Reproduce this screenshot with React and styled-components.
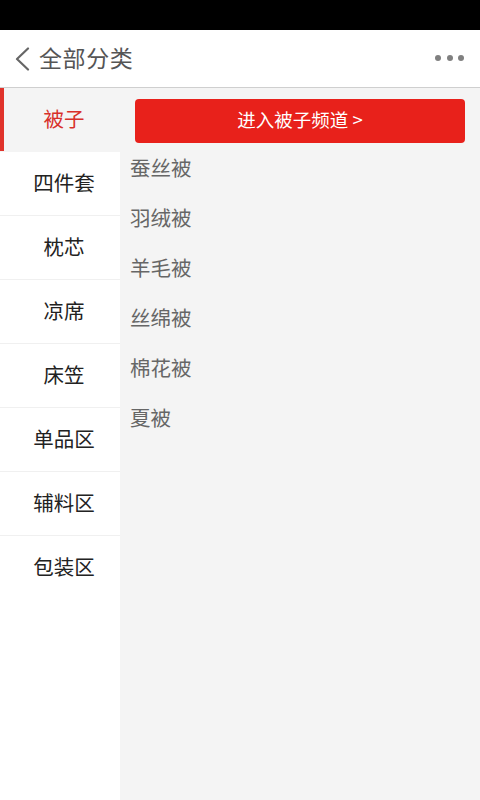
import React, { useState } from 'react'
import styled, { createGlobalStyle } from 'styled-components'

const CATEGORIES = ['被子', '四件套', '枕芯', '凉席', '床笠', '单品区', '辅料区', '包装区']
const SUBS = {
  '被子': ['蚕丝被', '羽绒被', '羊毛被', '丝绵被', '棉花被', '夏被'],
}

const GlobalStyle = createGlobalStyle`
  html, body {
    margin: 0;
    padding: 0;
    height: 100%;
  }
  body {
    font-family: "Noto Sans CJK SC", "Noto Sans", sans-serif;
    background: #f4f4f4;
  }
  #root {
    height: 100%;
  }
`

const App = () => {
  const [active, setActive] = useState('被子')
  const subs = SUBS[active] || []

  return (
    <Page>
      <GlobalStyle />
      <StatusBar />
      <Header>
        <BackButton>
          <svg width="16" height="24" viewBox="0 0 16 24" fill="none">
            <path d="M14 1.5 L3 12 L14 22.5" stroke="#666" strokeWidth="2.2" strokeLinecap="round" strokeLinejoin="round" />
          </svg>
        </BackButton>
        <Title>全部分类</Title>
        <More>
          <Dot />
          <Dot />
          <Dot />
        </More>
      </Header>
      <Body>
        <Sidebar>
          {CATEGORIES.map(c => (
            <Category key={c} active={c === active} onClick={() => setActive(c)}>
              {c}
            </Category>
          ))}
        </Sidebar>
        <Content>
          <ChannelButton>进入{active}频道 &gt;</ChannelButton>
          <SubList>
            {subs.map(s => (
              <SubItem key={s}>{s}</SubItem>
            ))}
          </SubList>
        </Content>
      </Body>
    </Page>
  )
}

const Page = styled.div`
  display: flex;
  flex-direction: column;
  width: 480px;
  height: 800px;
  overflow: hidden;
`
const StatusBar = styled.div`
  height: 30px;
  background: #000;
  flex-shrink: 0;
`
const Header = styled.div`
  display: flex;
  align-items: center;
  height: 58px;
  box-sizing: border-box;
  padding-bottom: 2px;
  background: #fff;
  border-bottom: 1px solid #cfcfcf;
  flex-shrink: 0;
`
const BackButton = styled.div`
  display: flex;
  align-items: center;
  padding: 0 9px 0 14px;
  margin-top: 2px;
`
const Title = styled.div`
  font-size: 23px;
  color: #555;
  letter-spacing: 0.6px;
  margin-top: -2px;
`
const More = styled.div`
  display: flex;
  gap: 5.5px;
  margin-left: auto;
  margin-right: 16px;
`
const Dot = styled.span`
  width: 6px;
  height: 6px;
  border-radius: 50%;
  background: #808080;
`
const Body = styled.div`
  display: flex;
  flex: 1;
  background: #f4f4f4;
`
const Sidebar = styled.div`
  width: 120px;
  background: #fff;
  display: flex;
  flex-direction: column;
  flex-shrink: 0;
`
const Category = styled.div`
  height: 64px;
  box-sizing: border-box;
  padding: 0 0 4px 8px;
  display: flex;
  align-items: center;
  justify-content: center;
  font-size: 20.5px;
  border-bottom: 1px solid #f0f0f0;
  ${props => props.active ? `
    color: #d8302a;
    background: #f4f4f4;
    box-shadow: inset 4px 0 0 #e0322b;
    border-bottom-color: #f4f4f4;
  ` : `
    color: #222;
    background: #fff;
  `}
  &:last-child {
    border-bottom: none;
  }
`
const Content = styled.div`
  flex: 1;
  padding: 11px 15px 0 10px;
`
const ChannelButton = styled.div`
  margin-left: 5px;
  height: 44px;
  box-sizing: border-box;
  padding-bottom: 4px;
  border-radius: 4px;
  background: #e8211b;
  color: #fff;
  font-size: 18.5px;
  display: flex;
  align-items: center;
  justify-content: center;
`
const SubList = styled.div`
  display: flex;
  flex-direction: column;
`
const SubItem = styled.div`
  height: 50px;
  line-height: 48px;
  font-size: 20.5px;
  color: #666;
`

export default App
